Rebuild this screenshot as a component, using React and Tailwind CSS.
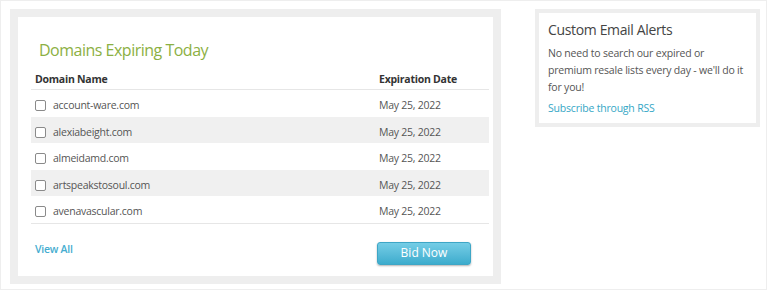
const domains = [
  'account-ware.com',
  'alexiabeight.com',
  'almeidamd.com',
  'artspeakstosoul.com',
  'avenavascular.com',
];

const Checkbox = () => (
  <span className="mt-[3px] mr-[7px] inline-block w-[11px] h-[11px] shrink-0 rounded-[2px] border border-[#8a8a8a] bg-white" />
);

export default function App() {
  return (
    <div
      className="w-[767px] h-[290px] border border-[#eeeeee] bg-white pl-[9px] pt-[8px] flex items-start"
      style={{ fontFamily: '"Open Sans", "Liberation Sans", sans-serif' }}
    >
      {/* Expiring today */}
      <div className="w-[491px] h-[275px] border-[8px] border-[#eeeeee] bg-white pl-[13px] pr-[4px] pt-[21px]">
        <h2 className="ml-[8px] text-[16px] leading-[24px] tracking-[-0.5px] text-[#8cb043]">Domains Expiring Today</h2>

        <div className="mt-[9px] grid grid-cols-[344px_1fr] pl-[4px] pb-[2px] border-b border-[#e6e6e6] text-[10.5px] leading-[16px] tracking-[-0.25px] font-bold text-[#333]">
          <span>Domain Name</span>
          <span>Expiration Date</span>
        </div>

        <div className="border-b border-[#e6e6e6]">
          {domains.map((d, i) => (
            <div
              key={d}
              className={`grid grid-cols-[344px_1fr] h-[26.6px] pl-[4px] pt-[7px] text-[10.5px] leading-[16px] tracking-[-0.25px] text-[#555] ${
                i % 2 === 1 ? 'bg-[#f0f0f0]' : 'bg-white'
              }`}
            >
              <span className="flex items-start">
                <Checkbox />
                {d}
              </span>
              <span>May 25, 2022</span>
            </div>
          ))}
        </div>

        <div className="mt-[18px] grid grid-cols-[342px_1fr] items-start pl-[4px]">
          <a className="-mt-[1px] text-[10.5px] leading-[16px] tracking-[-0.25px] font-semibold text-[#45add0]">View All</a>
          <button className="w-[94px] h-[23px] rounded-[3px] border border-[#3ea6c6] bg-gradient-to-b from-[#74cde6] to-[#3caccd] text-white text-[12px] leading-[20px] shadow-[0_1px_2px_rgba(0,0,0,0.3)]">
            Bid Now
          </button>
        </div>
      </div>

      {/* Custom alerts */}
      <div className="ml-[34px] w-[225px] border-[4px] border-[#eeeeee] bg-white pl-[9px] pr-[8px] pt-[7px] pb-[7px]">
        <h3 className="text-[14px] leading-[20px] tracking-[-0.35px] text-[#444]">Custom Email Alerts</h3>
        <p className="mt-[5px] text-[10.5px] leading-[17px] tracking-[-0.2px] text-[#555]">
          No need to search our expired or premium resale lists every day - we'll do it for you!
        </p>
        <a className="mt-[4px] block text-[10.5px] leading-[16px] tracking-[-0.2px] text-[#36a7c6]">Subscribe through RSS</a>
      </div>
    </div>
  );
}
